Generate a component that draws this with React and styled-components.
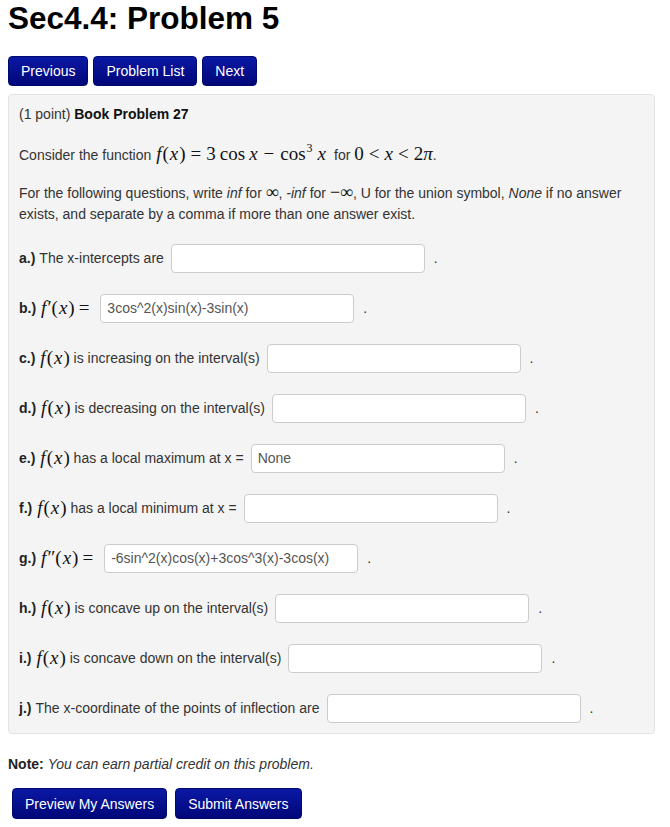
import React from 'react';
import styled, { createGlobalStyle } from 'styled-components';

const GlobalStyle = createGlobalStyle`
  body {
    margin: 0;
    background: #fff;
    font-family: "Liberation Sans", Arial, sans-serif;
    font-size: 14px;
    color: #333;
  }
`;

const Page = styled.div`
  padding: 0 8px;
  width: 647px;
`;

const Title = styled.h2`
  margin: 0;
  font-size: 31.5px;
  line-height: 36px;
  font-weight: bold;
  color: #000;
`;

const NavBar = styled.div`
  display: flex;
  gap: ${(p) => p.$gap || 5}px;
  margin-top: ${(p) => p.$mt || 20}px;
  padding-left: ${(p) => p.$indent || 0}px;
`;

const Button = styled.button`
  height: ${(p) => p.$h || 30}px;
  border: 1px solid #000a6e;
  border-radius: 4px;
  padding: 0 12px;
  background: linear-gradient(to bottom, #0a18a4, #010779);
  color: #fff;
  font-family: "Liberation Sans", Arial, sans-serif;
  font-size: 14px;
  cursor: pointer;
`;

const Panel = styled.div`
  margin-top: 8px;
  background: #f4f4f4;
  border: 1px solid #e3e3e3;
  border-radius: 4px;
  padding: 9px 10px 10px;
  display: flex;
  flex-direction: column;
`;

const Line = styled.div`
  line-height: 20px;
  height: 20px;
  margin-top: ${(p) => p.$mt || 0}px;
  white-space: nowrap;
  display: flex;
  align-items: baseline;
`;

const Para = styled.div`
  line-height: 21px;
  margin-top: ${(p) => p.$mt || 0}px;
  max-width: 618px;
`;

const Rows = styled.div`
  display: flex;
  flex-direction: column;
  gap: 20px;
  margin-top: 18px;
`;

const Row = styled.div`
  display: flex;
  align-items: center;
  height: 30px;
  white-space: nowrap;
`;

const Letter = styled.b`
  color: #222;
  margin-right: 4px;
`;

const Answer = styled.input`
  box-sizing: border-box;
  width: 254px;
  height: 29px;
  margin-left: 7px;
  padding: 4px 6px;
  border: 1px solid #ccc;
  border-radius: 4px;
  background: #fff;
  font-family: "Liberation Sans", Arial, sans-serif;
  font-size: 14px;
  color: #555;
  outline: none;
`;

const Dot = styled.span`
  margin-left: 9px;
`;

const M = styled.span`
  font-family: "Liberation Serif", "Times New Roman", serif;
  font-size: ${(p) => p.$fs || 19}px;
  color: #111;
  font-style: ${(p) => (p.$up ? 'normal' : 'italic')};
  margin: 0 ${(p) => p.$sp || 0}px;
  line-height: ${(p) => (p.$fs ? 14 : 20)}px;
`;

const Sup = styled.sup`
  font-size: 12px;
  vertical-align: 8px;
  line-height: 0;
  font-style: normal;
  margin-left: 1px;
`;

const Gap = styled.span`
  display: inline-block;
  width: ${(p) => p.$w}px;
`;

const Note = styled.div`
  margin-top: 20px;
  line-height: 20px;
  color: #222;
  i {
    color: #333;
  }
`;

const Fx = ({ prime = '' }) => (
  <>
    <M $sp={1}>f</M>
    {prime && <M $up>{prime}</M>}
    <M $up>(</M>
    <M $sp={1}>x</M>
    <M $up>)</M>
  </>
);

const rows = [
  { l: 'a.)', pre: 'The x-intercepts are', val: '' },
  { l: 'b.)', fx: '′', eq: true, val: '3cos^2(x)sin(x)-3sin(x)' },
  { l: 'c.)', fx: '', post: 'is increasing on the interval(s)', val: '' },
  { l: 'd.)', fx: '', post: 'is decreasing on the interval(s)', val: '' },
  { l: 'e.)', fx: '', post: 'has a local maximum at x =', val: 'None' },
  { l: 'f.)', fx: '', post: 'has a local minimum at x =', val: '' },
  { l: 'g.)', fx: '″', eq: true, val: '-6sin^2(x)cos(x)+3cos^3(x)-3cos(x)' },
  { l: 'h.)', fx: '', post: 'is concave up on the interval(s)', val: '' },
  { l: 'i.)', fx: '', post: 'is concave down on the interval(s)', val: '' },
  { l: 'j.)', pre: 'The x-coordinate of the points of inflection are', val: '' },
];

function App() {
  return (
    <Page>
      <GlobalStyle />
      <Title>Sec4.4: Problem 5</Title>
      <NavBar>
        <Button>Previous</Button>
        <Button>Problem List</Button>
        <Button>Next</Button>
      </NavBar>
      <Panel>
        <Line>
          (1 point)&nbsp;<b style={{ color: '#111' }}>Book Problem 27</b>
        </Line>
        <Line $mt={20}>
          Consider the function&nbsp;
          <Fx />
          <M $up $sp={5}>=</M>
          <M $up>3</M>
          <Gap $w={4} />
          <M $up>cos</M>
          <Gap $w={4} />
          <M>x</M>
          <M $up $sp={6}>−</M>
          <M $up>cos<Sup>3</Sup></M>
          <Gap $w={5} />
          <M>x</M>
          <Gap $w={8} />
          for&nbsp;
          <M $up>0</M>
          <M $up $sp={5}>&lt;</M>
          <M>x</M>
          <M $up $sp={5}>&lt;</M>
          <M $up>2</M>
          <M>π</M>.
        </Line>
        <Para $mt={19}>
          For the following questions, write <i>inf</i> for <M $up $fs={18}>∞</M>, <i>-inf</i> for{' '}
          <M $up $fs={18}>−∞</M>, U for the union symbol, <i>None</i> if no answer exists, and
          separate by a comma if more than one answer exist.
        </Para>
        <Rows>
          {rows.map((r) => (
            <Row key={r.l}>
              <Letter>{r.l}</Letter>
              {r.pre}
              {r.fx !== undefined && (
                <>
                  <Fx prime={r.fx} />
                  {r.eq ? <M $up $sp={4}>=</M> : <>&nbsp;{r.post}</>}
                </>
              )}
              <Answer defaultValue={r.val} />
              <Dot>.</Dot>
            </Row>
          ))}
        </Rows>
      </Panel>
      <Note>
        <b>Note:</b> <i>You can earn partial credit on this problem.</i>
      </Note>
      <NavBar $indent={4} $gap={8} $mt={14}>
        <Button $h={31}>Preview My Answers</Button>
        <Button $h={31}>Submit Answers</Button>
      </NavBar>
    </Page>
  );
}

export default App;
